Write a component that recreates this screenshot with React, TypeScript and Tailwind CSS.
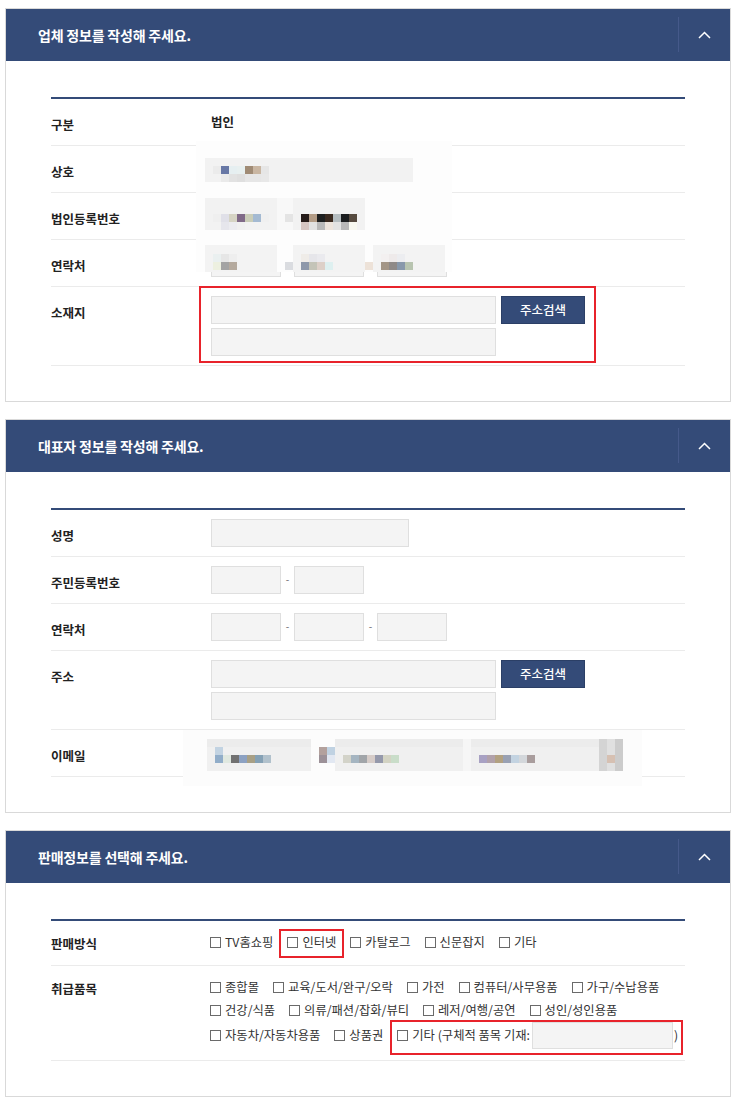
import React from "react";

type R = [number, number, number, number, string];

function sq(y: number, items: [number, string][], s = 8): R[] {
  return items.map(([x, c]) => [x, y, s, s, c] as R);
}

const mosaic1: R[] = [
  [196, 139, 256, 131, "#fdfdfd"],
  [205, 156, 208, 24, "#f2f2f2"],
  ...sq(164, [[213, "#ebebeb"], [221, "#6777a5"], [229, "#e6eff1"], [237, "#e8f0f0"], [245, "#a08b75"], [253, "#c9b6a2"], [261, "#e6e6e6"]]),
  ...sq(172, [[221, "#eaeaea"], [229, "#e2e2e2"], [237, "#dfdfdf"], [245, "#e6e6e6"], [253, "#e6e6e6"], [261, "#e8e8e8"]]),
  [205, 196, 72, 32, "#f2f2f2"],
  [277, 196, 16, 32, "#f8f8f8"],
  [293, 196, 72, 32, "#f2f2f2"],
  [285, 212, 8, 8, "#e4e4e4"],
  ...sq(212, [[213, "#efefef"], [221, "#e0e0e8"], [229, "#d6d4c4"], [237, "#806a88"], [245, "#cacdb8"], [253, "#a4bad2"], [261, "#f0f0f0"]]),
  ...sq(220, [[221, "#e6e6ec"], [229, "#ececf0"], [237, "#f0f0f0"]]),
  ...sq(212, [[301, "#261c1a"], [309, "#b39c86"], [317, "#1e2020"], [325, "#3a2a20"], [333, "#b5bdc0"], [341, "#1b1d1f"], [349, "#564a3f"]]),
  ...sq(220, [[301, "#d6c6c2"], [309, "#e2e2e2"], [317, "#b9b9b9"], [325, "#ede4dc"], [333, "#e3e3e3"], [341, "#b8b8b8"], [349, "#f8f8f0"]]),
  [205, 243, 72, 27, "#f3f3f3"],
  [293, 243, 72, 27, "#f3f3f3"],
  [373, 243, 72, 27, "#f3f3f3"],
  ...sq(252, [[213, "#eaf0f0"], [221, "#e6e6e6"], [229, "#eeeeee"], [301, "#efece8"], [309, "#e6e6ea"], [317, "#eaeaee"], [381, "#f3f0f0"], [389, "#eeeaea"], [397, "#ecedf0"]]),
  ...sq(260, [[213, "#edf0e0"], [221, "#a3a3a3"], [229, "#b5aa9e"], [285, "#dadce0"], [301, "#8e98aa"], [309, "#c4c4b8"], [317, "#ddd0c8"], [325, "#def0f0"], [365, "#ede2d8"], [381, "#a39586"], [389, "#8f8a88"], [397, "#8898ab"], [405, "#b8c4b0"]]),
];

const mosaic2: R[] = [
  [183, 727, 459, 56, "#fcfcfc"],
  [207, 736, 104, 32, "#f0f0f0"],
  [207, 736, 104, 8, "#ececec"],
  [335, 736, 128, 32, "#f0f0f0"],
  [335, 736, 128, 8, "#ececec"],
  [463, 736, 8, 32, "#f6f6f6"],
  [471, 736, 128, 32, "#f0f0f0"],
  [471, 736, 128, 8, "#ececec"],
  [599, 736, 8, 32, "#d4d4d4"],
  [607, 736, 8, 32, "#e0e0e0"],
  [615, 736, 8, 32, "#cccccc"],
  ...sq(744, [[215, "#c2d3e2"], [319, "#b3a19d"], [327, "#c0d2e2"]]),
  ...sq(752, [[215, "#91adc9"], [223, "#e0e8e0"], [231, "#717171"], [239, "#8ca1c2"], [247, "#a8a086"], [255, "#85a1b5"], [263, "#b1c1cc"], [319, "#9c9198"], [327, "#e2e8f2"]]),
  ...sq(752, [[343, "#d3d3c9"], [351, "#a5b5c1"], [359, "#a1a5a9"], [367, "#d6ccc8"], [375, "#9599ab"], [383, "#d3d3c3"], [391, "#c9ddc9"]]),
  ...sq(752, [[479, "#a8a1c3"], [487, "#b1a1aa"], [495, "#b2a181"], [503, "#99a1b3"], [511, "#c3d3e1"], [519, "#d3d7db"], [527, "#a99d9d"], [607, "#d6c0b2"]]),
];

function Mosaic({ rects, vb, className }: { rects: R[]; vb: string; className: string }) {
  return (
    <svg viewBox={vb} className={className} shapeRendering="crispEdges" preserveAspectRatio="none">
      {rects.map(([x, y, w, h, c], i) => (
        <rect key={i} x={x} y={y} width={w} height={h} fill={c} />
      ))}
    </svg>
  );
}

function Header({ title }: { title: string }) {
  return (
    <div className="h-[52px] bg-[#344b78] flex items-center justify-between">
      <div className="pl-[32px] text-white text-[14px] font-bold leading-none tracking-[-0.2px]">{title}</div>
      <div className="flex items-center h-full">
        <div className="w-px h-[35px] bg-[#45598a] mt-[-1px]" />
        <div className="w-[51px] flex justify-center">
          <svg width="13" height="8" viewBox="0 0 13 8">
            <polyline points="1,7 6.5,1.5 12,7" fill="none" stroke="#ffffff" strokeWidth="1.5" />
          </svg>
        </div>
      </div>
    </div>
  );
}

function Panel({ title, children, className = "" }: { title: string; children: React.ReactNode; className?: string }) {
  return (
    <div className={"w-[726px] border border-[#d9d9d9] bg-white " + className}>
      <Header title={title} />
      <div className="px-[45px] pt-[36px] pb-[35px]">
        <div className="relative border-t-2 border-[#344b78]">{children}</div>
      </div>
    </div>
  );
}

function Row({
  label,
  children,
  labelPt = "pt-[17px]",
  bodyCls = "py-[9px]",
  minH = "min-h-[47px]",
}: {
  label: string;
  children?: React.ReactNode;
  labelPt?: string;
  bodyCls?: string;
  minH?: string;
}) {
  return (
    <div className={"flex border-b border-[#ebebeb] " + minH}>
      <div className={"w-[160px] shrink-0 text-[12.5px] font-bold text-[#222] leading-[18px] " + labelPt}>{label}</div>
      <div className={"flex-1 " + bodyCls}>{children}</div>
    </div>
  );
}

function Input({ w }: { w: string }) {
  return <div className={"h-[28px] bg-[#f4f4f4] border border-[#dfdfdf] " + w} />;
}

function Dash() {
  return <span className="w-[13px] text-center text-[10px] text-[#666] leading-[28px] -mt-[2px]">-</span>;
}

function Phone() {
  return (
    <div className="flex items-center">
      <Input w="w-[70px]" />
      <Dash />
      <Input w="w-[70px]" />
      <Dash />
      <Input w="w-[70px]" />
    </div>
  );
}

function AddressGroup({ red = false }: { red?: boolean }) {
  return (
    <div className="relative w-[374px]">
      <div className="flex">
        <Input w="w-[285px]" />
        <div className="ml-[5px] w-[84px] h-[28px] bg-[#344b78] border border-[#2b3f66] flex items-center justify-center text-white text-[12.5px] font-medium">
          주소검색
        </div>
      </div>
      <div className="mt-[4px]">
        <Input w="w-[285px]" />
      </div>
      {red && <div className="absolute -left-[12px] -right-[11px] -top-[10px] -bottom-[7px] border-2 border-[#e8232b]" />}
    </div>
  );
}

function Box() {
  return <span className="inline-block w-[11px] h-[11px] border border-[#6a6a6a] bg-white shrink-0" />;
}

function Check({ label, red = false }: { label: string; red?: boolean }) {
  return (
    <span className="relative flex items-center gap-[4px] h-[23px] text-[12.3px] text-[#333]">
      <Box />
      <span className="whitespace-nowrap">{label}</span>
      {red && <span className="absolute -left-[8px] -right-[8px] -top-[2px] -bottom-[4px] border-2 border-[#e8232b]" />}
    </span>
  );
}

export default function App() {
  return (
    <div className="font-['Noto_Sans_CJK_KR','Noto_Sans',sans-serif] bg-white pt-[8px] pl-[5px] pb-[6px]">
      <Panel title="업체 정보를 작성해 주세요.">
        <Row label="구분">
          <div className="pl-0 text-[12.5px] font-bold text-[#222] leading-[28px]">법인</div>
        </Row>
        <Row label="상호" />
        <Row label="법인등록번호" />
        <Row label="연락처">
          <Phone />
        </Row>
        <Row label="소재지">
          <AddressGroup red />
        </Row>
        <Mosaic rects={mosaic1} vb="196 139 256 131" className="absolute left-[145px] top-[42px] w-[256px] h-[131px] pointer-events-none" />
      </Panel>

      <Panel title="대표자 정보를 작성해 주세요." className="mt-[17px]">
        <Row label="성명">
          <Input w="w-[198px]" />
        </Row>
        <Row label="주민등록번호">
          <div className="flex items-center">
            <Input w="w-[70px]" />
            <Dash />
            <Input w="w-[70px]" />
          </div>
        </Row>
        <Row label="연락처">
          <Phone />
        </Row>
        <Row label="주소">
          <AddressGroup />
        </Row>
        <Row label="이메일" />
        <Mosaic rects={mosaic2} vb="183 727 459 56" className="absolute left-[132px] top-[220px] w-[459px] h-[56px] pointer-events-none" />
      </Panel>

      <Panel title="판매정보를 선택해 주세요." className="mt-[17px]">
        <Row label="판매방식" labelPt="pt-[14px]" bodyCls="pt-[10px] pb-[11px]" minH="min-h-[45px]">
          <div className="flex gap-x-[14px] -ml-[1px]">
            <Check label="TV홈쇼핑" />
            <Check label="인터넷" red />
            <Check label="카탈로그" />
            <Check label="신문잡지" />
            <Check label="기타" />
          </div>
        </Row>
        <Row label="취급품목" labelPt="pt-[14px]" bodyCls="pt-[10px] pb-[11px]">
          <div className="flex flex-col -ml-[1px]">
            <div className="flex gap-x-[14px]">
              <Check label="종합몰" />
              <Check label="교육/도서/완구/오락" />
              <Check label="가전" />
              <Check label="컴퓨터/사무용품" />
              <Check label="가구/수납용품" />
            </div>
            <div className="flex gap-x-[14px]">
              <Check label="건강/식품" />
              <Check label="의류/패션/잡화/뷰티" />
              <Check label="레저/여행/공연" />
              <Check label="성인/성인용품" />
            </div>
            <div className="flex gap-x-[14px] items-center h-[27px]">
              <Check label="자동차/자동차용품" />
              <Check label="상품권" />
              <span className="relative flex items-center gap-[4px] h-[27px] text-[12.3px] text-[#333]">
                <Box />
                <span className="whitespace-nowrap">기타 (구체적 품목 기재:</span>
                <span className="w-[141px] h-[27px] bg-[#f4f4f4] border border-[#dfdfdf] ml-[-2px]" />
                <span className="ml-[-3px]">)</span>
                <span className="absolute -left-[7px] -right-[5px] -top-[2px] -bottom-[6px] border-2 border-[#e8232b]" />
              </span>
            </div>
          </div>
        </Row>
      </Panel>
    </div>
  );
}
